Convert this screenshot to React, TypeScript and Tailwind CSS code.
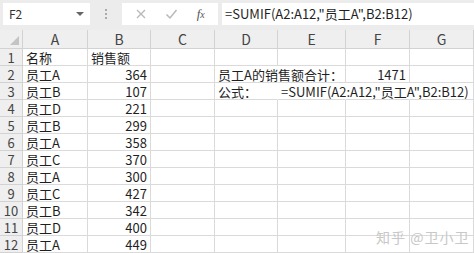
import React from "react";

const cols = [
  { key: "A", w: "w-[65px]" },
  { key: "B", w: "w-[63px]" },
  { key: "C", w: "w-[64px]" },
  { key: "D", w: "w-[63px]" },
  { key: "E", w: "w-[68px]" },
  { key: "F", w: "w-[64px]" },
  { key: "G", w: "w-[64px]" },
];

const data: [string, number][] = [
  ["员工A", 364],
  ["员工B", 107],
  ["员工D", 221],
  ["员工B", 299],
  ["员工A", 358],
  ["员工C", 370],
  ["员工A", 300],
  ["员工C", 427],
  ["员工B", 342],
  ["员工D", 400],
  ["员工A", 449],
];

type Cell = { text?: string; right?: boolean; hideBorder?: boolean };

function rowCells(r: number): Cell[] {
  const cells: Cell[] = cols.map(() => ({}));
  if (r === 1) {
    cells[0] = { text: "名称" };
    cells[1] = { text: "销售额" };
  } else {
    const [name, val] = data[r - 2];
    cells[0] = { text: name };
    cells[1] = { text: String(val), right: true };
  }
  if (r === 2) {
    cells[3] = { text: "员工A的销售额合计：", hideBorder: true };
    cells[5] = { text: "1471", right: true };
  }
  if (r === 3) {
    cells[3] = { text: "公式：", hideBorder: true };
    cells[4] = { text: '=SUMIF(A2:A12,"员工A",B2:B12)', hideBorder: true };
    cells[5] = { hideBorder: true };
  }
  return cells;
}

export default function App(): React.JSX.Element {
  const rows = Array.from({ length: 12 }, (_, i) => i + 1);
  return (
    <div className="w-[474px] h-[253px] overflow-hidden bg-white text-[13px] text-[#1f1f1f] font-['Noto_Sans_CJK_SC',sans-serif] relative">
      {/* formula bar */}
      <div className="h-[30px] bg-[#ececec] flex items-start pt-[3px] pl-[3px] gap-[4px]">
        <div className="w-[87px] h-[22px] bg-white flex items-center justify-between pl-[6px] pr-[6px] text-[12px] text-[#333]">
          <span>F2</span>
          <span className="w-0 h-0 border-l-[4px] border-r-[4px] border-t-[4px] border-l-transparent border-r-transparent border-t-[#666]" />
        </div>
        <div className="w-[24px] h-[22px] flex flex-col items-center justify-center gap-[2px]">
          <span className="w-[2px] h-[2px] bg-[#aaa]" />
          <span className="w-[2px] h-[2px] bg-[#aaa]" />
          <span className="w-[2px] h-[2px] bg-[#aaa]" />
        </div>
        <div className="w-[96px] h-[22px] bg-white flex items-center justify-around px-[4px]">
          <svg width="12" height="12" viewBox="0 0 12 12">
            <path d="M2 2 L10 10 M10 2 L2 10" stroke="#b8b8b8" strokeWidth="1.3" />
          </svg>
          <svg width="13" height="12" viewBox="0 0 13 12">
            <path d="M1.5 6.5 L5 10 L11.5 2" stroke="#b8b8b8" strokeWidth="1.5" fill="none" />
          </svg>
          <span className="font-['Liberation_Serif',serif] italic text-[13px] text-[#555]">
            f<span className="text-[10px]">x</span>
          </span>
        </div>
        <div className="flex-1 h-[22px] bg-white flex items-center pl-[3px] text-[13px] whitespace-nowrap">
          =SUMIF(A2:A12,"员工A",B2:B12)
        </div>
      </div>

      {/* column headers */}
      <div className="flex h-[19px] bg-[#efefef] border-b border-[#d2d2d2] text-[14px] text-[#444]">
        <div className="w-[23px] shrink-0 border-r border-[#d2d2d2] flex items-end justify-end pr-[3px] pb-[3px]">
          <svg width="9" height="9" viewBox="0 0 9 9">
            <path d="M9 0 L9 9 L0 9 Z" fill="#c4c4c4" />
          </svg>
        </div>
        {cols.map((c) => (
          <div
            key={c.key}
            className={`${c.w} shrink-0 border-r border-[#d2d2d2] flex items-center justify-center leading-none`}
          >
            {c.key}
          </div>
        ))}
      </div>

      {/* rows */}
      {rows.map((r) => (
        <div key={r} className="flex h-[17px]">
          <div className="w-[23px] shrink-0 bg-[#efefef] border-r border-b border-[#d2d2d2] flex items-center justify-center text-[13px] text-[#444] leading-none">
            {r}
          </div>
          {rowCells(r).map((cell, i) => (
            <div
              key={i}
              className={`${cols[i].w} shrink-0 border-b border-[#dadada] ${
                cell.hideBorder ? "border-r border-r-transparent" : "border-r border-r-[#dadada]"
              } flex items-center px-[3px] whitespace-nowrap leading-none ${
                cell.right ? "justify-end" : "justify-start"
              }`}
            >
              {cell.text ?? ""}
            </div>
          ))}
        </div>
      ))}

      {/* watermark */}
      <div className="absolute left-[376px] top-[227px] text-[14px] text-[#c8c8c8] tracking-[1px] whitespace-nowrap">
        知乎 @卫小卫
      </div>
    </div>
  );
}
